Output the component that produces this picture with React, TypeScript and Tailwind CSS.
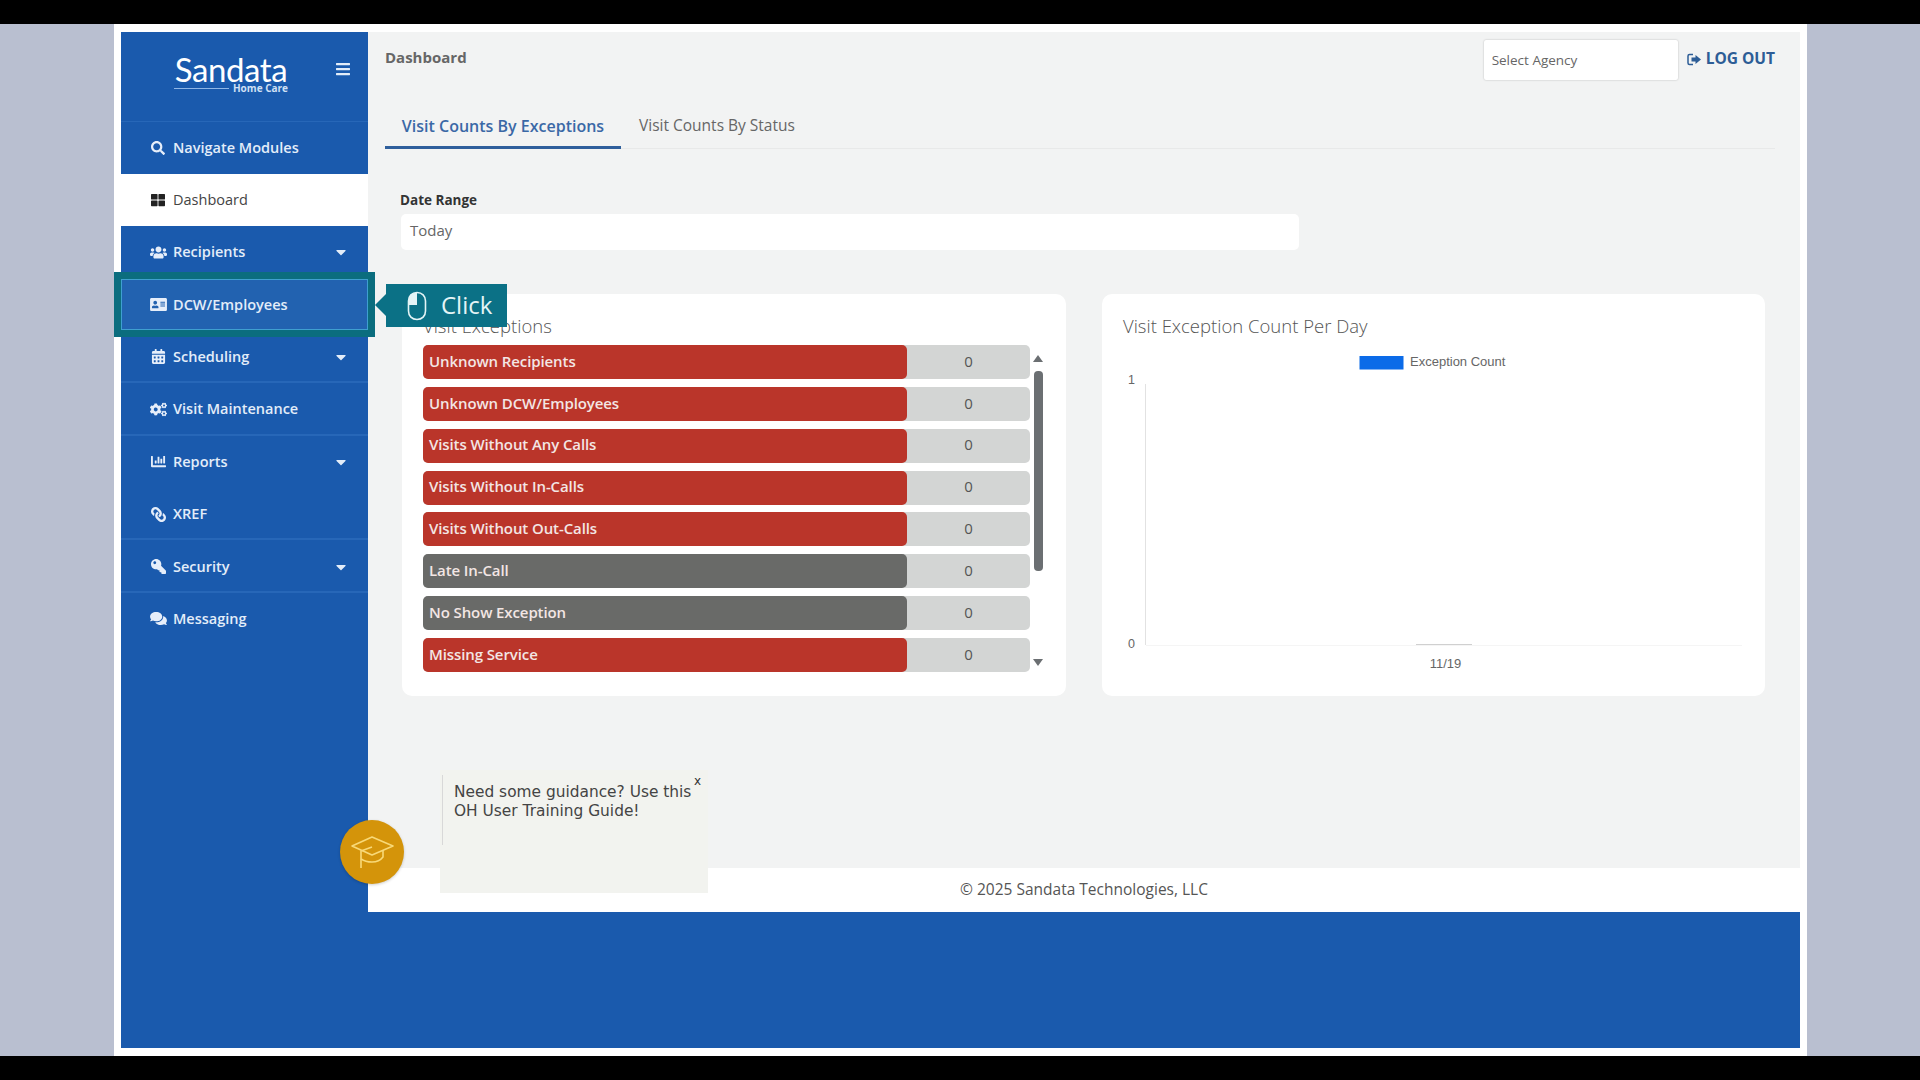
import {
  FaSearch,
  FaThLarge,
  FaUsers,
  FaAddressCard,
  FaCalendarAlt,
  FaCogs,
  FaChartBar,
  FaLink,
  FaKey,
  FaComments,
  FaCaretDown,
  FaBars,
} from "react-icons/fa";
import type { IconType } from "react-icons";

interface NavItem {
  label: string;
  icon: IconType;
  caret?: boolean;
  line?: boolean;
  flip?: boolean;
}

const navItems: NavItem[] = [
  { label: "Recipients", icon: FaUsers, caret: true },
  { label: "DCW/Employees", icon: FaAddressCard },
  { label: "Scheduling", icon: FaCalendarAlt, caret: true, line: true },
  { label: "Visit Maintenance", icon: FaCogs, line: true },
  { label: "Reports", icon: FaChartBar, caret: true },
  { label: "XREF", icon: FaLink, line: true, flip: true },
  { label: "Security", icon: FaKey, caret: true, line: true, flip: true },
  { label: "Messaging", icon: FaComments },
];

const exceptions = [
  { label: "Unknown Recipients", red: true },
  { label: "Unknown DCW/Employees", red: true },
  { label: "Visits Without Any Calls", red: true },
  { label: "Visits Without In-Calls", red: true },
  { label: "Visits Without Out-Calls", red: true },
  { label: "Late In-Call", red: false },
  { label: "No Show Exception", red: false },
  { label: "Missing Service", red: true },
];

function Logo() {
  return (
    <div className="w-[114px] text-white">
      <div className="font-['Lato',sans-serif] text-[33px] font-normal leading-[25px] tracking-[-0.4px] text-center">
        Sandata
      </div>
      <div className="flex items-center gap-[4px] mt-[1px]">
        <div className="h-px w-[56px] bg-[#8fb6e6]" />
        <div className="font-['Open_Sans',sans-serif] text-[10px] font-bold leading-[11px] text-[#cfe0f5] whitespace-nowrap">
          Home Care
        </div>
      </div>
    </div>
  );
}

function SideRow({ item }: { item: NavItem }) {
  const Icon = item.icon;
  const active = item.label === "DCW/Employees";
  return (
    <div className={`relative h-[52.4px] ${active ? "bg-[#2262b0]" : ""}`}>
      <div
        className={`flex items-center h-full pl-[29px] pr-[19px] ${
          item.line ? "shadow-[inset_0_-2px_0_#2767b8]" : ""
        }`}
      >
        <Icon className={`w-[17px] h-[15px] text-[#e6eefa] shrink-0 ${item.flip ? "-scale-x-100" : ""}`} />
        <span className="ml-[6px] text-[14.5px] font-semibold text-[#e3edf9]">{item.label}</span>
        {item.caret && <FaCaretDown className="ml-auto w-[16px] h-[16px] text-[#e3edf9]" />}
      </div>
      {active && (
        <>
          <div className="absolute -left-[7px] -right-[7px] -top-[6px] -bottom-[6px] border-[7px] border-[#0b6d7e] z-10">
            <div className="w-full h-full border border-[#3f9fd0]" />
          </div>
          <div className="absolute left-[254px] top-[16px] z-20 w-0 h-0 border-y-[11px] border-y-transparent border-r-[11px] border-r-[#0b7186]" />
          <div className="absolute left-[265px] top-[6px] z-20 w-[121px] h-[43px] bg-[#0b7186] flex items-center pl-[21px] gap-[14px]">
            <svg width="20" height="30" viewBox="0 0 20 30" fill="none">
              <path d="M10 1.5C5 1.5 1.5 5 1.5 10v10c0 5 3.5 8.5 8.5 8.5s8.5-3.5 8.5-8.5V10c0-5-3.5-8.5-8.5-8.5z" stroke="#e4f4f6" strokeWidth="1.6" />
              <path d="M10 1.5C5 1.5 1.5 5 1.5 10v4H10z" fill="#e4f4f6" />
            </svg>
            <span className="text-[24px] leading-none pb-[1px] text-[#e4f4f6]">Click</span>
          </div>
        </>
      )}
    </div>
  );
}

function Sidebar() {
  return (
    <aside className="w-[247px] shrink-0 bg-[#1a5aad]">
      <div className="relative h-[90px] flex items-start pt-[25px] pl-[53px] border-b border-[#2767b8]">
        <Logo />
        <FaBars className="absolute left-[214px] top-[29px] w-[16px] h-[16px] text-[#e3edf9]" />
      </div>
      <div className="h-[52px] flex items-center pl-[29px]">
        <FaSearch className="w-[14px] h-[14px] ml-[1px] mr-[8px] text-[#e6eefa]" />
        <span className="text-[14.5px] font-semibold text-[#e3edf9]">Navigate Modules</span>
      </div>
      <div className="h-[52px] flex items-center pl-[29px] bg-white">
        <FaThLarge className="w-[14px] h-[14px] ml-[1px] mr-[8px] text-[#222]" />
        <span className="text-[14.5px] text-[#444]">Dashboard</span>
      </div>
      {navItems.map((item) => (
        <SideRow key={item.label} item={item} />
      ))}
    </aside>
  );
}

function ExceptionsCard() {
  return (
    <div className="w-[664px] h-[402px] bg-white rounded-[10px] pt-[21px] pl-[21px]">
      <h3 className="h-[24px] text-[18.5px] font-light leading-[22px] text-[#555]">Visit Exceptions</h3>
      <div className="flex mt-[6px]">
        <div className="w-[607px] flex flex-col gap-[7.86px]">
          {exceptions.map((row) => (
            <div key={row.label} className="flex h-[34px] bg-[#d3d5d4] rounded-[5px]">
              <div
                className={`w-[484px] rounded-[5px] flex items-center pl-[6px] pb-[2px] text-[15px] font-semibold tracking-[-0.1px] text-[#f3e6e4] ${
                  row.red ? "bg-[#ba352a]" : "bg-[#696a68]"
                }`}
              >
                {row.label}
              </div>
              <div className="flex-1 flex items-center justify-center pb-[2px] text-[15px] text-[#555]">0</div>
            </div>
          ))}
        </div>
        <div className="w-[16px] flex flex-col items-center">
          <div className="mt-[10px] w-0 h-0 border-x-[5px] border-x-transparent border-b-[7px] border-b-[#6b6f72]" />
          <div className="mt-[9px] w-[9px] h-[200px] rounded-[4px] bg-[#6b6f72]" />
          <div className="mt-[88px] w-0 h-0 border-x-[5px] border-x-transparent border-t-[7px] border-t-[#6b6f72]" />
        </div>
      </div>
    </div>
  );
}

function ChartCard() {
  return (
    <div className="w-[663px] h-[402px] bg-white rounded-[10px] pt-[21px] pl-[21px]">
      <h3 className="h-[24px] text-[18.5px] font-light leading-[22px] text-[#555]">Visit Exception Count Per Day</h3>
      <svg width="642" height="335" viewBox="21 0 642 335" className="mt-[6px] block font-['Liberation_Sans',sans-serif]">
        <rect x="257.5" y="11" width="44" height="13.5" fill="#0b6be8" />
        <text x="308" y="20.5" fontSize="13" fill="#666">Exception Count</text>
        <text x="26" y="39" fontSize="12.5" fill="#666">1</text>
        <text x="26" y="303" fontSize="12.5" fill="#666">0</text>
        <line x1="43.5" y1="39" x2="43.5" y2="300" stroke="#e2e2e2" />
        <line x1="44" y1="300.5" x2="640" y2="300.5" stroke="#f5f5f5" />
        <line x1="314" y1="299.5" x2="370" y2="299.5" stroke="#d0d0d0" />
        <text x="343.5" y="323" fontSize="13" fill="#666" textAnchor="middle">11/19</text>
      </svg>
    </div>
  );
}

function TrainingNote() {
  return (
    <>
      <div className="absolute left-[72px] top-[738px] w-[268px] h-[123px] bg-[#f2f3ef] pl-[14px] pt-[13px] font-['DejaVu_Sans',sans-serif] text-[15.4px] leading-[18.5px] text-[#444]">
        <div className="absolute left-[2px] top-[5px] w-px h-[70px] bg-[#d8d8d8]" />
        <span className="absolute right-[7px] top-[2px] text-[12px] leading-[18px] text-[#333]">x</span>
        <p className="whitespace-nowrap">
          Need some guidance? Use this
          <br />
          OH User Training Guide!
        </p>
      </div>
      <div className="absolute -left-[28px] top-[788px] w-[64px] h-[64px] rounded-full bg-[#d4940a] flex items-center justify-center shadow-[0_1px_3px_rgba(0,0,0,0.2)]">
        <svg width="44" height="34" viewBox="0 0 44 34" fill="none" stroke="#f8d978" strokeWidth="1.6" strokeLinejoin="round">
          <path d="M22 2 43 11 22 20 2 11z" />
          <path d="M33 15v7c-3 4-7 5-11 5-4 0-8-1-11-3" />
          <path d="M22 12 11 16v17" />
        </svg>
      </div>
    </>
  );
}

export default function App() {
  return (
    <div className="h-screen flex flex-col bg-black font-['Open_Sans',sans-serif]">
      <div className="h-[24px] shrink-0" />
      <div className="flex-1 bg-[#b9bfd0] px-[113px]">
        <div className="w-[1693px] h-full ml-px bg-white px-[7px] py-[8px]">
          <div className="flex h-full bg-[#1a5aad]">
            <Sidebar />
            <main className="relative flex-1 h-[880px] flex flex-col bg-[#f2f3f3]">
              <header className="h-[72px] flex justify-between pl-[17px] pr-[25px] pt-[8px]">
                <h1 className="mt-[7px] text-[15px] font-bold leading-[20px] text-[#666]">Dashboard</h1>
                <div className="flex items-start gap-[9px]">
                  <div className="w-[194px] h-[40px] bg-white rounded-[2px] shadow-[0_0_2px_rgba(0,0,0,0.25)] flex items-center pl-[8px] text-[13.5px] text-[#666]">
                    Select Agency
                  </div>
                  <div className="h-[38px] flex items-center gap-[5px] text-[15.5px] font-bold text-[#2d5d96]">
                    <svg width="14" height="13" viewBox="0 0 14 13" fill="none">
                      <path d="M6 1.5H2.5a1.5 1.5 0 0 0-1.5 1.5v7a1.5 1.5 0 0 0 1.5 1.5H6" stroke="#2d5d96" strokeWidth="1.5" />
                      <path d="M8.5 2 14 6.5 8.5 11V8.5H4.5v-4h4z" fill="#2d5d96" />
                    </svg>
                    LOG OUT
                  </div>
                </div>
              </header>
              <nav className="h-[45px] ml-[17px] mr-[25px] flex border-b border-[#e8e9e9]">
                <div className="w-[236px] h-[45px] border-b-[3px] border-[#2f5f9c] flex items-center justify-center pt-[2px] text-[16px] font-semibold text-[#3a68a6]">
                  Visit Counts By Exceptions
                </div>
                <div className="ml-[18px] h-[45px] flex items-center pb-[1px] text-[15.5px] text-[#666]">
                  Visit Counts By Status
                </div>
              </nav>
              <label className="mt-[41px] ml-[32px] h-[20px] text-[13.5px] font-bold leading-[20px] text-[#333]">
                Date Range
              </label>
              <div className="mt-[4px] ml-[33px] w-[898px] h-[36px] bg-white rounded-[5px] flex items-center pl-[9px] pb-[3px] text-[15px] text-[#666]">
                Today
              </div>
              <div className="mt-[44px] ml-[34px] flex gap-[36px]">
                <ExceptionsCard />
                <ChartCard />
              </div>
              <footer className="mt-auto h-[44px] bg-white flex items-center justify-center pb-[1px] text-[15.5px] text-[#555]">
                © 2025 Sandata Technologies, LLC
              </footer>
              <TrainingNote />
            </main>
          </div>
        </div>
      </div>
      <div className="h-[24px] shrink-0" />
    </div>
  );
}
